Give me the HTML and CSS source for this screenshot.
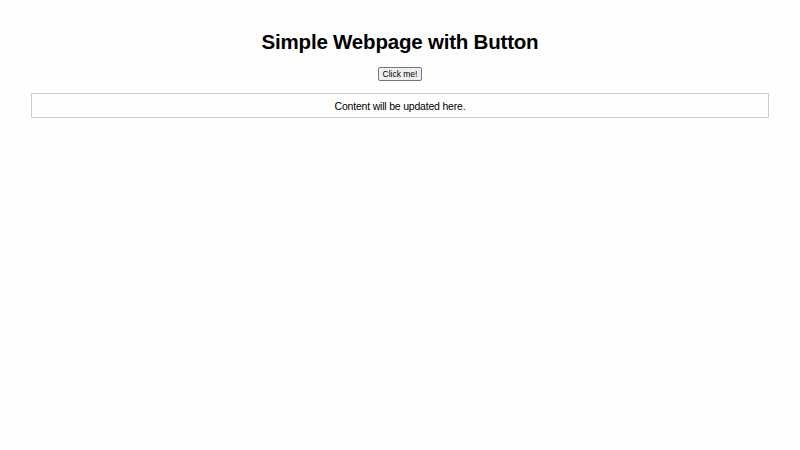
FILE: index.html
```html
<!DOCTYPE html>
<html>
<head>
<meta charset="utf-8">
<title>Simple Webpage with Button</title>
<link rel="stylesheet" href="styles.css">
</head>
<body>
<div class="page">
  <h1 class="title">Simple Webpage with Button</h1>
  <div class="actions"><button class="btn" type="button">Click me!</button></div>
  <div class="content">Content will be updated here.</div>
</div>
</body>
</html>
```
FILE: styles.css
```css
html, body {
  margin: 0;
  padding: 0;
  background: #fefefe;
}
.page {
  font-family: "Liberation Sans", Arial, sans-serif;
  text-align: center;
  color: #000;
  padding: 28px 31px 0;
}
.title {
  font-size: 20.5px;
  letter-spacing: -0.2px;
  font-weight: bold;
  line-height: 28px;
  margin: 0;
}
.actions {
  margin-top: 11px;
  line-height: 0;
}
.btn {
  font-family: "Liberation Sans", Arial, sans-serif;
  font-size: 8.5px;
  line-height: 10px;
  padding: 1px 4px;
  border: 1px solid #767676;
  border-radius: 2px;
  background: #efefef;
  color: #000;
}
.content {
  margin-top: 12px;
  border: 1px solid #cccccc;
  padding: 4px 0 3px;
  font-size: 10.5px;
  letter-spacing: -0.2px;
  line-height: 16px;
}
```
